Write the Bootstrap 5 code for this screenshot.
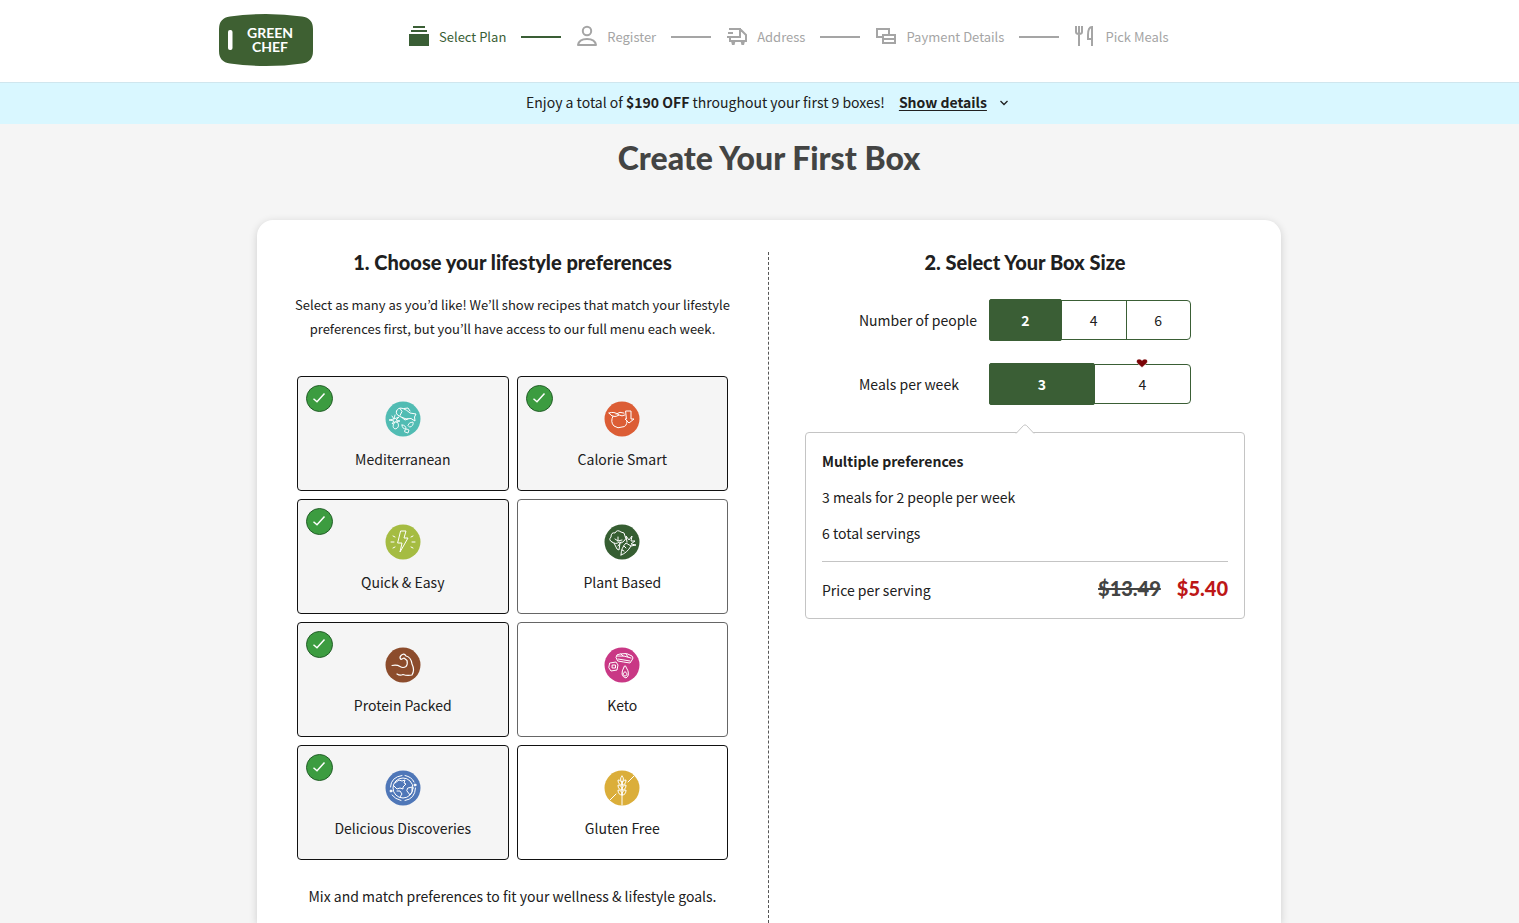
<!DOCTYPE html>
<html lang="en">
<head>
<meta charset="utf-8">
<meta name="viewport" content="width=device-width, initial-scale=1">
<title>Green Chef – Select Plan</title>
<link rel="stylesheet" href="https://cdn.jsdelivr.net/npm/bootstrap@5.3.0/dist/css/bootstrap.min.css">
<style>
:root{--leaf:#3a5e35;--ink:#202020;--muted:#a5a5a5;--shift:19px}
body{background:#f5f5f5;color:var(--ink);font-family:"Noto Sans CJK KR","Open Sans",sans-serif;font-size:14px;line-height:24px}
h1,h2,.display-face{font-family:Lato,"Open Sans",sans-serif;font-weight:900}
.site-header{padding-left:var(--shift);border-bottom:1px solid #cfe6ee}
.header-inner{max-width:1100px;height:82px}
.brand{width:94px;height:52px;margin-right:94px;top:-1px}
.brand-shape{inset:0}
.brand-name{font:700 14px/14px Lato,sans-serif;padding-left:8px}
.brand-name span{display:block}
.steps{padding-bottom:8px}
.step{font-size:13px;color:var(--muted);gap:8px;text-decoration:none;white-space:nowrap}
.step svg{width:24px;height:24px;margin-bottom:2px;fill:none;stroke:currentColor;stroke-width:2}
.step.current{color:var(--leaf)}
.step-line{width:40px;height:2px;background:var(--muted);margin:0 14px 0 15px}
.step-line.done{background:var(--leaf)}
.promo{background:#d9f7ff;padding:7px 0 10px var(--shift)}
.promo a{color:inherit;text-underline-offset:2px;margin:0 9px 0 14px}
main{padding-left:var(--shift)}
h1{font-size:32px;line-height:40px;color:#434443;margin:14px 0 42px}
h2{font-size:20px;line-height:20px}
.plan-card{max-width:1024px;border-radius:16px 16px 0 0;box-shadow:0 2px 8px rgba(0,0,0,.16);padding-top:32px}
.prefs{padding:0 40px 12px;border-right:1px dashed #555;flex:1 1 50%}
.sizes{padding:0 36px;flex:1 1 50%}
.sizes h2{margin-bottom:28px}
.intro{font-size:13px;margin:21px -8px 35px}
.tile-grid{display:grid;grid-template-columns:1fr 1fr;gap:8px}
.tile{border:1px solid #666;border-radius:4px;padding:24px 8px 19px;gap:10px;cursor:pointer}
.tile svg{width:36px;height:36px;fill:none;stroke:#fff;stroke-linecap:round;stroke-linejoin:round}
.tile.picked{background:#f5f5f5}
.tile.picked,.tile.strong{border-color:#111}
.tile input{position:absolute;top:8px;left:8px;width:27px;height:27px;margin:0;appearance:none;border:1px solid #235e28;border-radius:50%;opacity:0;background:#3c9c40 url("data:image/svg+xml,%3Csvg xmlns='http://www.w3.org/2000/svg' viewBox='0 0 25 25'%3E%3Cpath d='M6.500 12.800l3.500 3L17.500 7.500' fill='none' stroke='white' stroke-width='1.500'/%3E%3C/svg%3E")}
.tile input:checked{opacity:1}
.choices{width:332px;max-width:100%;margin:0 auto;height:40px}
.choice-set{width:202px;height:40px}
.choice-set .btn{--bs-btn-font-size:14px;--bs-btn-color:var(--ink);--bs-btn-border-color:var(--leaf);--bs-btn-active-bg:var(--leaf);--bs-btn-active-border-color:var(--leaf);--bs-btn-active-color:#fff;--bs-btn-hover-color:var(--ink);--bs-btn-hover-border-color:var(--leaf);--bs-btn-border-radius:4px;--bs-btn-padding-x:0;line-height:24px;padding:7px 0;flex:1 1 0}
.choice-set .btn-check:checked+.btn{font-weight:700;flex:0 0 73px;margin:-1px 0;padding:8px 0;border-radius:2px!important}
.choice-set.pair .btn-check:checked+.btn{flex-basis:106px}
.heart{width:12px;height:10px;top:-7px;left:50%;margin-left:-7px}
.summary{border:1px solid #c4c4c4;border-radius:4px;padding:16px;margin-top:28px}
.summary p{margin-bottom:12px}
.summary .caret{width:22px;height:10px;top:-9px;left:50%;margin-left:-11px}
.price-row{border-top:1px solid #c4c4c4;margin-top:16px;padding-top:16px}
.price-row .display-face{font-size:20px;line-height:20px}
.price-row s{color:#434443;margin-right:16px}
.price-now{color:#bd1717}
</style>
</head>
<body class="min-vh-100 d-flex flex-column">
<header class="site-header bg-white">
 <div class="header-inner mx-auto d-flex align-items-center">
  <a href="#" class="brand position-relative d-flex align-items-center justify-content-center text-white text-center text-decoration-none flex-shrink-0">
   <svg class="brand-shape position-absolute" width="94" height="52" viewBox="0 0 94 52" aria-hidden="true"><path fill="#3e6032" d="M0 15Q0 4 11 2.500Q28 0 47 0T83 2.500Q94 4 94 15V37Q94 48 83 49.500Q66 52 47 52T11 49.500Q0 48 0 37Z"/><rect x="9" y="16" width="4.500" height="20" rx="2" fill="#fff"/></svg>
   <span class="brand-name position-relative"><span>GREEN</span><span>CHEF</span></span>
  </a>
  <nav class="steps d-flex align-items-center" aria-label="Progress">
   <a href="#" class="step current d-flex align-items-center"><svg viewBox="0 0 24 24" aria-hidden="true"><path d="M6 3h12M4 7h16"/><path fill="currentColor" stroke="none" d="M2 10h20v12H2z"/></svg>Select Plan</a>
   <span class="step-line done"></span>
   <a href="#" class="step d-flex align-items-center"><svg viewBox="0 0 24 24" aria-hidden="true"><circle cx="12" cy="7" r="4.200"/><path stroke-linejoin="round" d="M3 21Q4 15 12 15T21 21Z"/></svg>Register</a>
   <span class="step-line"></span>
   <a href="#" class="step d-flex align-items-center"><svg viewBox="0 0 24 24" aria-hidden="true"><path d="M4 5h11v8H5M3 9h5M2 13h4M15 5l6 6v6H5v-4"/><path fill="currentColor" stroke="none" d="M6 17h4.500l-1 4H7zM15.500 17H20l-1 4h-2.500z"/></svg>Address</a>
   <span class="step-line"></span>
   <a href="#" class="step d-flex align-items-center"><svg viewBox="0 0 24 24" aria-hidden="true"><path d="M8 13H3V5h12v5M9 11h12v8H9zM9 15h12"/></svg>Payment Details</a>
   <span class="step-line"></span>
   <a href="#" class="step d-flex align-items-center"><svg viewBox="0 0 24 24" aria-hidden="true"><path d="M6 10v12M3 2v6q0 2 3 2t3-2V2M6 2v7M19 22V3q-4 0-4 8v4h4"/></svg>Pick Meals</a>
  </nav>
 </div>
</header>
<div class="promo d-flex align-items-center justify-content-center">
 <span>Enjoy a total of <strong>$190 OFF</strong> throughout your first 9 boxes!</span>
 <a href="#" class="fw-bold">Show details</a>
 <svg width="16" height="16" viewBox="0 0 16 16" fill="none" stroke="#202020" stroke-width="1.300" aria-hidden="true"><path d="M4.500 7L8 10.500 11.500 7"/></svg>
</div>
<main class="flex-grow-1 d-flex flex-column">
 <h1 class="text-center">Create Your First Box</h1>
 <div class="plan-card bg-white w-100 mx-auto flex-grow-1 d-flex">
  <section class="prefs text-center">
   <h2 class="mb-0">1. Choose your lifestyle preferences</h2>
   <p class="intro">Select as many as you’d like! We’ll show recipes that match your lifestyle preferences first, but you’ll have access to our full menu each week.</p>
   <div class="tile-grid">
    <label class="tile picked position-relative d-flex flex-column align-items-center"><input type="checkbox" checked>
     <svg viewBox="0 0 36 36" aria-hidden="true"><circle cx="18" cy="18" r="17.500" fill="#51bcb3" stroke="none"/><path d="M11.500 10Q13 6 18 7.500Q22 9 25 12L31 13 29.500 16 30 20 26 17.500Q21 19 16 16L12.500 14Q10.500 12 11.500 10M15 7.500l2 3-2 4M19 7.500l4-.5 2 3M17 16.500l3 2.500 3-1"/><path stroke-width=".9" d="M7 15l2 3-5 1 5 1-2 3 3-2M10 14l-1 4 5-2-3 3 4 1-4 1M10 21q-4 5 0 7 5-1 3-6zM23 24q1-3 5-3 1 4-3 5zM17 24q4 0 4 4-4 0-4-4M20 29q2-2 4 0l-1 3-3-1z"/></svg>Mediterranean</label>
    <label class="tile picked position-relative d-flex flex-column align-items-center"><input type="checkbox" checked>
     <svg viewBox="0 0 36 36" aria-hidden="true"><circle cx="18" cy="18" r="17.500" fill="#dc5d35" stroke="none"/><path d="M9 15Q6 21 10 25q4 3 8 1 5 0 5-6M5 12q5-2 10 2-6 4-10-2M12 13q4-3 8-1M15 14q3 2 6 0M22 10h5v8h3l-5 4-4-4h1z"/></svg>Calorie Smart</label>
    <label class="tile picked position-relative d-flex flex-column align-items-center"><input type="checkbox" checked>
     <svg viewBox="0 0 36 36" aria-hidden="true"><circle cx="18" cy="18" r="17.500" fill="#a5bc42" stroke="none"/><path d="M16 7h5l-2 7h4L15 28l2-9h-4zM6 18h3M27 18h3M8 12l2 1M28 12l-2 1M8 24l2-1M28 24l-2-1"/></svg>Quick &amp; Easy</label>
    <label class="tile position-relative d-flex flex-column align-items-center"><input type="checkbox">
     <svg viewBox="0 0 36 36" aria-hidden="true"><circle cx="18" cy="18" r="17.500" fill="#365e32" stroke="none"/><path d="M8 18q-4-2-1-5 0-5 4-4 2-4 6-1 4 0 4 4 2 3-1 5-2 3-5 1-3 3-7 0M11 15l3 2 0-4M14 17l4-1M10 19l3 6 2 1 1-7M14 22l3-4M17 31q0-7 5-12l5 3q-4 7-10 9M20 22l2 2M18 26l2 1M23 18l-1-6 3 4 3-4-1 5 4 0-4 3 5 1-5 1"/></svg>Plant Based</label>
    <label class="tile picked position-relative d-flex flex-column align-items-center"><input type="checkbox" checked>
     <svg viewBox="0 0 36 36" aria-hidden="true"><circle cx="18" cy="18" r="17.500" fill="#8c4c2c" stroke="none"/><path stroke-width="1.200" d="M7 18.500q5-1 8 1 3 2 6 0 2-2 1-6l-3-2.500-3 1.500q-2-2 0-4 3-3 5 .5 5 1 6 8 3 6 0 11-5 1-9-.5-3 1.500-6-.5"/></svg>Protein Packed</label>
    <label class="tile position-relative d-flex flex-column align-items-center"><input type="checkbox">
     <svg viewBox="0 0 36 36" aria-hidden="true"><circle cx="18" cy="18" r="17.500" fill="#c93885" stroke="none"/><path d="M12 10q0-3 4-3 7-2 12 2 2 2 0 4l-2 3q-7-1-12-2zM13 9q7-1 14 2M14 12l12 2M17 7l2 2M22 7l2 3M6 16l6-1 2 3-1 5-6 1-2-3zM8.500 18l3 0 0 3-3 0zM20 20q1-3 2 0 5 8 0 11-7-2-2-11M21 25a2 2 0 1 0 .1 0"/></svg>Keto</label>
    <label class="tile picked position-relative d-flex flex-column align-items-center"><input type="checkbox" checked>
     <svg viewBox="0 0 36 36" aria-hidden="true"><circle cx="18" cy="18" r="17.500" fill="#4f77b8" stroke="none"/><circle cx="18" cy="18" r="10"/><path d="M5.500 17Q6 7 17 5.500M20 5.500Q27 7 29 12M30.500 18Q30 29 20 30.500M16 30.500Q10 29 7 25M10 13l4-3 3 1 3-1-1 3 2 1-3 3 0 2-3-1-3 1-3-3M12 21l3 0 2 3-2 3M23 18l4-1 0 5-2 3-3-4z"/><circle cx="6" cy="21" r="1" fill="#fff"/><circle cx="30" cy="15" r="1" fill="#fff"/></svg>Delicious Discoveries</label>
    <label class="tile strong position-relative d-flex flex-column align-items-center"><input type="checkbox">
     <svg viewBox="0 0 36 36" aria-hidden="true"><circle cx="18" cy="18" r="17.500" fill="#dbae3a" stroke="none"/><path d="M6 30l6-6M24 12l6-6M18 35V12M18 6q-3 3 0 6 3-3 0-6M18 15q-4 0-4-5 4 0 4 5 4 0 4-5-4 0-4 5M18 20q-4 0-4-5 4 0 4 5 4 0 4-5-4 0-4 5M18 25q-4 0-4-5 4 0 4 5 4 0 4-5-4 0-4 5"/></svg>Gluten Free</label>
   </div>
   <p class="mb-0 mt-4">Mix and match preferences to fit your wellness &amp; lifestyle goals.</p>
  </section>
  <section class="sizes">
   <h2 class="text-center">2. Select Your Box Size</h2>
   <div class="choices d-flex align-items-center justify-content-between mb-4" role="group" aria-labelledby="people-label">
    <span id="people-label">Number of people</span>
    <div class="choice-set btn-group">
     <input class="btn-check" type="radio" name="people" id="people2" checked><label class="btn" for="people2">2</label>
     <input class="btn-check" type="radio" name="people" id="people4"><label class="btn" for="people4">4</label>
     <input class="btn-check" type="radio" name="people" id="people6"><label class="btn" for="people6">6</label>
    </div>
   </div>
   <div class="choices d-flex align-items-center justify-content-between" role="group" aria-labelledby="meals-label">
    <span id="meals-label">Meals per week</span>
    <div class="choice-set pair btn-group">
     <input class="btn-check" type="radio" name="meals" id="meals3" checked><label class="btn" for="meals3">3</label>
     <input class="btn-check" type="radio" name="meals" id="meals4"><label class="btn" for="meals4">4<svg class="heart position-absolute" viewBox="0 0 12 10" aria-hidden="true"><path fill="#7a0406" stroke="#fff" stroke-width=".5" d="M6 9.500L1 5Q-.5 1.500 3 1q2 0 3 1.500Q7 1 9 1q3.500.5 2 4z"/></svg></label>
    </div>
   </div>
   <div class="summary position-relative">
    <svg class="caret position-absolute" viewBox="0 0 22 10" aria-hidden="true"><path fill="#fff" stroke="#c4c4c4" d="M2 9.500L9.500 1.500Q11 .2 12.500 1.500L20 9.500"/></svg>
    <p class="fw-bold">Multiple preferences</p>
    <p>3 meals for 2 people per week</p>
    <p class="mb-0">6 total servings</p>
    <div class="price-row d-flex justify-content-between">
     <span>Price per serving</span>
     <span class="display-face"><s>$13.49</s><span class="price-now">$5.40</span></span>
    </div>
   </div>
  </section>
 </div>
</main>
<script src="https://cdn.jsdelivr.net/npm/bootstrap@5.3.0/dist/js/bootstrap.bundle.min.js"></script>
</body>
</html>
